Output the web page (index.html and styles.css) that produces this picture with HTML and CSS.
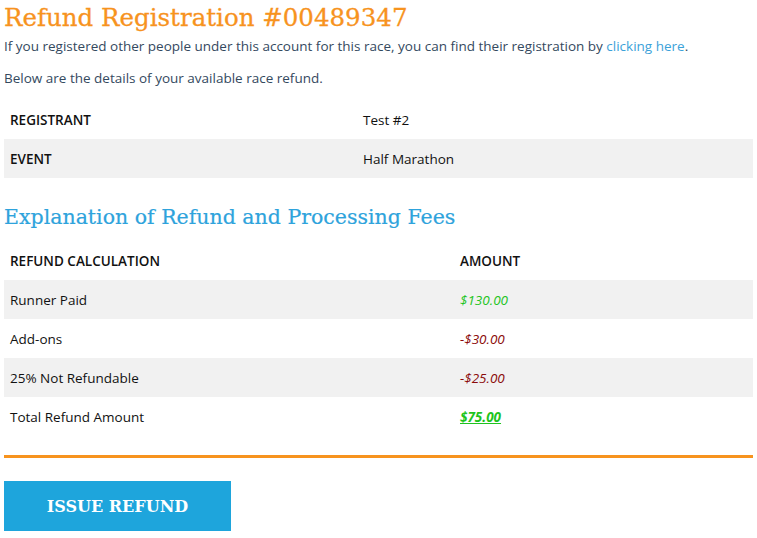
FILE: index.html
```html
<!DOCTYPE html>
<html lang="en">
<head>
    <meta charset="UTF-8">
    <meta name="viewport" content="width=device-width, initial-scale=1.0">
    <title>Refund Registration</title>
    <link rel="stylesheet" href="styles.css">
</head>
<body>
    <div class="page">
        <h1 class="title">Refund Registration #00489347</h1>
        <p class="note">If you registered other people under this account for this race, you can find their registration by <a href="#">clicking here</a>.</p>
        <p class="note last">Below are the details of your available race refund.</p>

        <table class="details">
            <tr>
                <th>REGISTRANT</th>
                <td>Test #2</td>
            </tr>
            <tr class="shaded">
                <th>EVENT</th>
                <td>Half Marathon</td>
            </tr>
        </table>

        <h2 class="subtitle">Explanation of Refund and Processing Fees</h2>

        <table class="refund">
            <tr>
                <th>REFUND CALCULATION</th>
                <th>AMOUNT</th>
            </tr>
            <tr class="shaded">
                <td>Runner Paid</td>
                <td class="plus">$130.00</td>
            </tr>
            <tr>
                <td>Add-ons</td>
                <td class="minus">-$30.00</td>
            </tr>
            <tr class="shaded">
                <td>25% Not Refundable</td>
                <td class="minus">-$25.00</td>
            </tr>
            <tr>
                <td>Total Refund Amount</td>
                <td class="plus total">$75.00</td>
            </tr>
        </table>

        <hr class="divider">

        <button class="issue">ISSUE REFUND</button>
    </div>
</body>
</html>
```

FILE: styles.css
```css
body {
    margin: 0;
    font-family: "Open Sans", Arial, sans-serif;
    font-size: 13.5px;
    color: #34495e;
    background: #fff;
}

.page {
    padding: 4px 4px;
}

.title {
    font-family: "DejaVu Serif", serif;
    font-weight: normal;
    font-size: 24.5px;
    color: #f7931e;
    margin: 0 0 4px;
    line-height: 28px;
    -webkit-text-stroke: 0.3px #f7931e;
}

.note {
    margin: 0 0 12px;
    line-height: 20px;
}

.note.last {
    margin-bottom: 12px;
}

.note a {
    color: #3ba2d9;
    text-decoration: none;
}

table {
    width: 100%;
    border-collapse: collapse;
    color: #111;
}

th, td {
    text-align: left;
    height: 39px;
    padding: 0 6px;
    vertical-align: middle;
}

th {
    font-weight: 600;
}

.shaded {
    background: #f1f1f1;
}

.details th {
    width: 341px;
}

.subtitle {
    font-family: "DejaVu Serif", serif;
    font-weight: normal;
    font-size: 20.5px;
    color: #2ea3dc;
    margin: 24px 0 9px;
    line-height: 30px;
    -webkit-text-stroke: 0.2px #2ea3dc;
}

.refund tr > :first-child {
    width: 438px;
}

.plus {
    color: #1ec41e;
    font-style: italic;
}

.minus {
    color: #8b0a0a;
    font-style: italic;
}

.total {
    font-weight: bold;
    text-decoration: underline;
}

.divider {
    border: 0;
    border-top: 3px solid #f7931e;
    margin: 19px 0 23px;
}

.issue {
    background: #1ea5dc;
    color: #fff;
    border: 0;
    width: 227px;
    height: 50px;
    font-family: "DejaVu Serif", serif;
    font-weight: bold;
    font-size: 16px;
    cursor: pointer;
}
```
